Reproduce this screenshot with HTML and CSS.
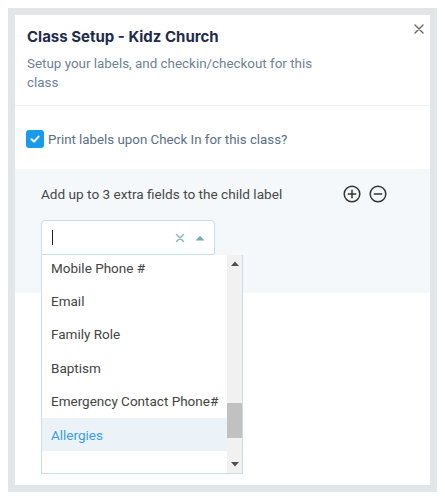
FILE: index.html
```html
<!DOCTYPE html>
<html>
<head>
<meta charset="utf-8">
<link rel="stylesheet" href="styles.css">
</head>
<body>
<div class="frame">
  <div class="panel">
    <button class="close" aria-label="close">
      <svg width="10" height="10" viewBox="0 0 10 10"><path d="M1 1L9 9M9 1L1 9" stroke="#666" stroke-width="1.4" stroke-linecap="round"/></svg>
    </button>
    <div class="header">
      <h1 class="title">Class Setup - Kidz Church</h1>
      <p class="subtitle">Setup your labels, and checkin/checkout for this class</p>
    </div>
    <div class="check-row">
      <span class="checkbox">
        <svg width="12" height="12" viewBox="0 0 12 12"><path d="M2.5 6.3L5 8.6L9.6 3.6" fill="none" stroke="#fff" stroke-width="2" stroke-linecap="round" stroke-linejoin="round"/></svg>
      </span>
      <span class="check-label">Print labels upon Check In for this class?</span>
    </div>
    <div class="fields">
      <div class="fields-head">
        <span class="fields-label">Add up to 3 extra fields to the child label</span>
        <span class="icons">
          <svg width="18" height="18" viewBox="0 0 18 18"><circle cx="9" cy="9" r="7.8" fill="none" stroke="#333" stroke-width="1.5"/><path d="M9 5.3V12.7M5.3 9H12.7" stroke="#333" stroke-width="1.5" stroke-linecap="round"/></svg>
          <svg width="18" height="18" viewBox="0 0 18 18"><circle cx="9" cy="9" r="7.8" fill="none" stroke="#333" stroke-width="1.5"/><path d="M5.3 9H12.7" stroke="#333" stroke-width="1.5" stroke-linecap="round"/></svg>
        </span>
      </div>
      <div class="select-wrap">
        <div class="select">
          <span class="caret"></span>
          <span class="select-tools">
            <svg width="10" height="10" viewBox="0 0 10 10"><path d="M1.5 1.5L8.5 8.5M8.5 1.5L1.5 8.5" stroke="#8db6ca" stroke-width="1.5" stroke-linecap="round"/></svg>
            <svg width="10" height="6" viewBox="0 0 10 6"><path d="M0.5 5.5L5 0.8L9.5 5.5Z" fill="#7fa7bc"/></svg>
          </span>
        </div>
        <div class="dropdown">
          <div class="options">
            <div class="opt">Mobile Phone #</div>
            <div class="opt">Email</div>
            <div class="opt">Family Role</div>
            <div class="opt">Baptism</div>
            <div class="opt">Emergency Contact Phone#</div>
            <div class="opt active">Allergies</div>
            <div class="opt"></div>
          </div>
          <div class="scrollbar">
            <div class="arrow"><svg width="8" height="5" viewBox="0 0 8 5"><path d="M0 5L4 0.5L8 5Z" fill="#505050"/></svg></div>
            <div class="track"><div class="thumb"></div></div>
            <div class="arrow"><svg width="8" height="5" viewBox="0 0 8 5"><path d="M0 0L4 4.5L8 0Z" fill="#505050"/></svg></div>
          </div>
        </div>
      </div>
    </div>
  </div>
</div>
</body>
</html>
```

FILE: styles.css
```css
* { box-sizing: border-box; }
html, body { margin: 0; padding: 0; background: #ffffff; }
body { padding: 8px; font-family: Roboto, "Noto Sans", sans-serif; }

.frame {
  width: 429px;
  height: 484px;
  background: #e2e6e9;
  padding: 7px;
}
.panel {
  position: relative;
  background: #ffffff;
  height: 470px;
}
.close {
  position: absolute;
  top: 7px;
  right: 4px;
  width: 14px;
  height: 14px;
  padding: 0;
  border: 0;
  background: none;
  display: flex;
  align-items: center;
  justify-content: center;
}
.header {
  padding: 12px 12px 13px 12px;
  border-bottom: 1px solid #eef0f2;
}
.title {
  margin: 0;
  font-family: Inter, Roboto, sans-serif;
  font-size: 15px;
  line-height: 20px;
  font-weight: 700;
  color: #1e2b4d;
}
.subtitle {
  margin: 7px 0 0 0;
  max-width: 300px;
  font-size: 13.4px;
  line-height: 19px;
  color: #6e8296;
}
.check-row {
  display: flex;
  align-items: center;
  gap: 4px;
  padding: 22px 11px 0 11px;
  height: 63px;
}
.checkbox {
  width: 18px;
  height: 18px;
  border-radius: 3px;
  background: #1a9be9;
  display: flex;
  align-items: center;
  justify-content: center;
  flex: none;
  margin-top: -19px;
}
.check-label {
  font-size: 13.3px;
  color: #5b6f84;
  margin-top: -19px;
}
.fields {
  background: #f5f8fa;
  height: 124px;
  padding: 16px 43px 0 26px;
}
.fields-head {
  display: flex;
  align-items: center;
  justify-content: space-between;
  height: 18px;
}
.fields-label {
  font-size: 13.6px;
  color: #484848;
}
.icons {
  display: flex;
  gap: 8px;
}
.select-wrap {
  position: relative;
  margin-top: 17px;
  width: 174px;
}
.select {
  height: 35px;
  border: 1px solid #c9dde9;
  border-radius: 4px 4px 0 0;
  background: #ffffff;
  display: flex;
  align-items: center;
  justify-content: space-between;
  padding: 0 9px 0 10px;
}
.caret {
  width: 1px;
  height: 15px;
  background: #222;
}
.select-tools {
  display: flex;
  align-items: center;
  gap: 10px;
}
.dropdown {
  position: absolute;
  top: 35px;
  left: 0;
  width: 202px;
  height: 219px;
  border: 1px solid #c9dde9;
  border-top: 0;
  background: #ffffff;
  display: flex;
  overflow: hidden;
}
.options {
  flex: 1;
  margin-top: -4px;
}
.opt {
  height: 33.4px;
  display: flex;
  align-items: center;
  padding-left: 9px;
  font-size: 13.5px;
  color: #444444;
  white-space: nowrap;
}
.opt.active {
  background: #ebf3f8;
  color: #3d9be0;
}
.scrollbar {
  width: 15px;
  background: #f1f1f1;
  display: flex;
  flex-direction: column;
}
.arrow {
  height: 17px;
  display: flex;
  align-items: center;
  justify-content: center;
}
.track {
  flex: 1;
  padding-top: 131px;
}
.thumb {
  height: 35px;
  background: #c1c1c1;
}
```
